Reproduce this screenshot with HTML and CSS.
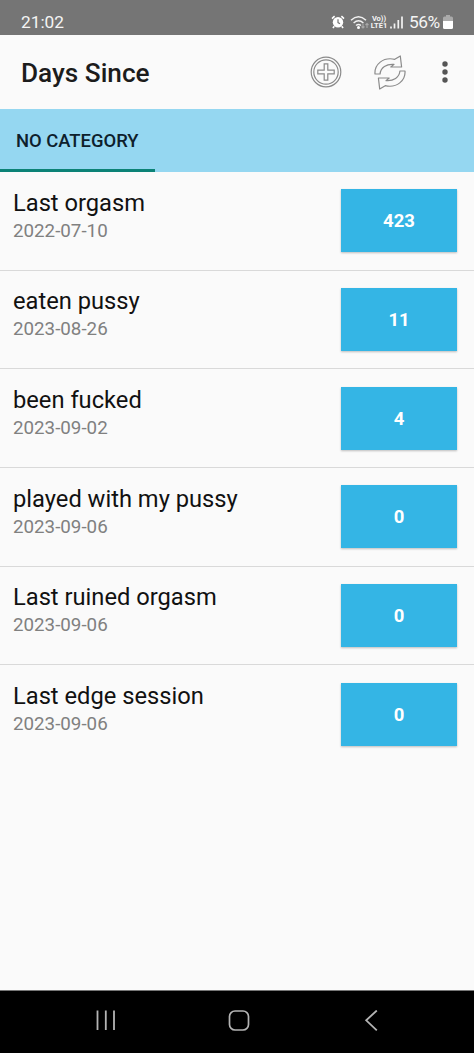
FILE: index.html
```
<!DOCTYPE html>
<html lang="en">
<head>
<meta charset="utf-8">
<title>Days Since</title>
<link rel="stylesheet" href="styles.css">
</head>
<body>
<div class="screen">
  <div class="status">
    <span class="clock">21:02</span>
    <svg class="alarm" width="14" height="14" viewBox="0 0 14 14">
      <circle cx="7" cy="7.3" r="5.2" fill="#fff"/>
      <path d="M1 3.6 3.6 1.2M13 3.6 10.4 1.2M3.3 11.3 1.9 13M10.7 11.3l1.4 1.7" stroke="#fff" stroke-width="1.6"/>
      <path d="M7 4.3v3.3l2 1.2" fill="none" stroke="#757575" stroke-width="1.2"/>
    </svg>
    <svg class="wifi" width="20" height="15" viewBox="0 0 20 15">
      <path d="M1 5.2Q8.5-1.6 16 5.2M3.6 8Q8.5 3.6 13.4 8M6 10.5q2.500-2 5 0" fill="none" stroke="#f2f2f2" stroke-width="1.500"/>
      <circle cx="8.500" cy="12.500" r="1.500" fill="#fff"/>
      <path d="M13 8.500v4.500m-1.500-1.500L13 13l1.500-1.500M17 13V8.500m-1.500 1.500L17 8.500l1.500 1.500" fill="none" stroke="#a8a8a8" stroke-width="1.100"/>
    </svg>
    <div class="lte"><span>Vo))</span><span>LTE1</span></div>
    <svg class="signal" width="14" height="13" viewBox="0 0 14 13">
      <path d="M1 10.500v2M4.500 7.500v5M8.300 4v8.500M12 .5v12" stroke="#f2f2f2" stroke-width="1.700"/>
    </svg>
    <span class="percent">56%</span>
    <svg class="battery" width="10" height="14" viewBox="0 0 10 14">
      <path d="M3 0h4v1.500H3zM1.500 1.500h7q1.500 0 1.500 1.500v3H0V3q0-1.500 1.500-1.500" fill="#aaa"/>
      <path d="M0 6h10v6.500q0 1.500-1.500 1.500h-7Q0 14 0 12.500z" fill="#fff"/>
    </svg>
  </div>
  <header class="appbar">
    <h1>Days Since</h1>
    <svg class="add" width="32" height="32" viewBox="0 0 32 32" fill="none" stroke="#8a8a8a" stroke-width="1.200">
      <circle cx="16" cy="16" r="14.800"/><circle cx="16" cy="16" r="12.200"/>
      <path d="M14.200 7.800h3.600v6.400h6.400v3.600h-6.400v6.400h-3.600v-6.400H7.800v-3.600h6.400z"/>
    </svg>
    <svg class="refresh" width="32" height="35" viewBox="0 0 32 35" fill="none" stroke="#8a8a8a" stroke-width="1.200" stroke-linejoin="round">
      <path id="arrow" d="M1 19C.3 9.500 9 1.700 20.800 4.300L26.300 1 27.600 12 16.800 12 20 9.400C12.500 8.700 6.500 12.700 6.100 19z"/>
      <use href="#arrow" transform="rotate(180 16 17.500)"/>
    </svg>
    <svg class="more" width="6" height="22" viewBox="0 0 6 22" fill="#555"><circle cx="3" cy="3" r="2.700"/><circle cx="3" cy="11" r="2.700"/><circle cx="3" cy="19" r="2.700"/></svg>
  </header>
  <nav class="tabs"><div class="tab">NO CATEGORY</div></nav>
  <main>
    <section class="row"><div class="info"><h2>Last orgasm</h2><p>2022-07-10</p></div><div class="count">423</div></section>
    <section class="row"><div class="info"><h2>eaten pussy</h2><p>2023-08-26</p></div><div class="count">11</div></section>
    <section class="row"><div class="info"><h2>been fucked</h2><p>2023-09-02</p></div><div class="count">4</div></section>
    <section class="row"><div class="info"><h2>played with my pussy</h2><p>2023-09-06</p></div><div class="count">0</div></section>
    <section class="row"><div class="info"><h2>Last ruined orgasm</h2><p>2023-09-06</p></div><div class="count">0</div></section>
    <section class="row"><div class="info"><h2>Last edge session</h2><p>2023-09-06</p></div><div class="count">0</div></section>
  </main>
  <footer class="navbar">
    <svg width="20" height="22" viewBox="0 0 20 22"><path d="M1.500 .5v19.500M9.800 .5v19.500M18 .5v19.500" stroke="#b4b4b4" stroke-width="1.800"/></svg>
    <svg class="home" width="22" height="22" viewBox="0 0 22 22"><rect x="1.500" y="1" width="19" height="19" rx="5.500" fill="none" stroke="#b4b4b4" stroke-width="1.700"/></svg>
    <svg width="14" height="22" viewBox="0 0 14 22"><path d="M12.800 .5 2.200 10.300 12.800 20.300" fill="none" stroke="#b4b4b4" stroke-width="1.800"/></svg>
  </footer>
</div>
</body>
</html>
```
FILE: styles.css
```
* { box-sizing: border-box; }
body { margin: 0; background: #fafafa; font-family: Roboto, sans-serif; }
h1, h2, p { margin: 0; font-weight: 400; }
svg { display: block; flex: none; }
.screen { width: 474px; height: 1053px; display: flex; flex-direction: column; overflow: hidden; }
.status { height: 35px; flex: none; background: #757575; color: #f4f4f4; display: flex; align-items: center; padding: 9px 21px 0 21px; }
.clock { font-size: 17.300px; line-height: 20px; flex: 1; }
.wifi { margin-left: 5px; }
.lte { width: 18px; margin-left: 0; display: flex; flex-direction: column; align-items: center; font-size: 7.500px; line-height: 7px; font-weight: 700; }
.signal { margin-left: 2px; }
.percent { font-size: 17.300px; line-height: 20px; width: 34px; margin-left: 5px; letter-spacing: -.4px; }
.appbar { height: 74px; flex: none; display: flex; align-items: center; padding: 0 26px 0 21px; }
.appbar h1 { flex: 1; font-size: 26.200px; font-weight: 500; color: #1c1c1c; line-height: 32px; padding-top: 2px; }
.refresh { margin-left: 32px; }
.more { margin-left: 36px; }
.tabs { height: 63px; flex: none; background: #95d7f1; display: flex; }
.tab { width: 155px; border-bottom: 3px solid #0b8276; padding: 2px 0 0 16px; line-height: 60px; font-size: 18.400px; font-weight: 500; color: #0d202c; white-space: nowrap; }
main { flex: 1; }
.row { height: 98.700px; border-bottom: 1.500px solid #d9d9d9; display: flex; justify-content: space-between; padding: 17.300px 17px 0 13px; }
.row:last-child { border-bottom: 0; }
.info { margin-top: -.6px; }
.info h2 { font-size: 23.700px; line-height: 28px; color: #111; white-space: nowrap; }
.info p { font-size: 18.750px; line-height: 22px; color: #808080; padding-top: 3px; }
.count { width: 116px; height: 63px; background: #34b5e5; color: #fff; font-size: 18.500px; font-weight: 700; line-height: 65px; text-align: center; box-shadow: 0 1px 2px rgba(0, 0, 0, .25); }
.navbar { height: 63px; flex: none; background: #000; border-top: 1px solid #777; display: flex; justify-content: space-between; padding: 19px 96px 0 96px; }
.home { margin-right: 3px; }
```
